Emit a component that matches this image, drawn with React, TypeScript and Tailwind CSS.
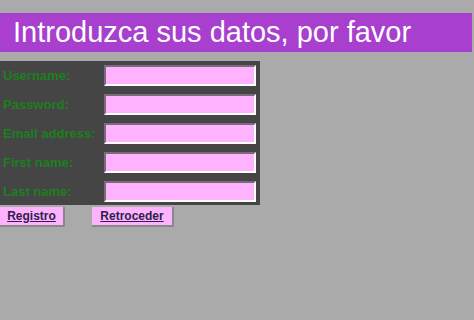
import React from 'react';

const fields = ['Username:', 'Password:', 'Email address:', 'First name:', 'Last name:'];

export default function App() {
  return (
    <div className="w-[474px] h-[320px] bg-[#aaaaaa] pt-[13px] font-['Liberation_Sans',Arial,sans-serif]">
      <h1 className="h-[39px] bg-[#a83fcf] text-white text-[29px] leading-[39px] pl-[13px] mr-[2px]">
        Introduzca sus datos, por favor
      </h1>
      <div className="mt-[9px] w-[260px] bg-[#454545] pt-[4px] pb-[3px] flex flex-col gap-[8px]">
        {fields.map((f) => (
          <div key={f} className="flex items-center h-[21px]">
            <span className="w-[104px] pl-[3px] text-[13px] font-bold text-[#1d7f1d]">{f}</span>
            <input
              className="w-[152px] h-[21px] bg-[#ffb3ff] border-2 border-t-[#7a6a7a] border-l-[#7a6a7a] border-b-white border-r-white outline-none"
            />
          </div>
        ))}
      </div>
      <div className="flex mt-[2px]">
        <button className="w-[65px] h-[20px] bg-[#ffb3ff] border-r-2 border-b-2 border-[#888888] text-[12px] font-bold underline text-[#2d1f4d] leading-none">
          Registro
        </button>
        <button className="ml-[27px] w-[82px] h-[20px] bg-[#ffb3ff] border-r-2 border-b-2 border-[#888888] text-[12px] font-bold underline text-[#2d1f4d] leading-none">
          Retroceder
        </button>
      </div>
    </div>
  );
}
